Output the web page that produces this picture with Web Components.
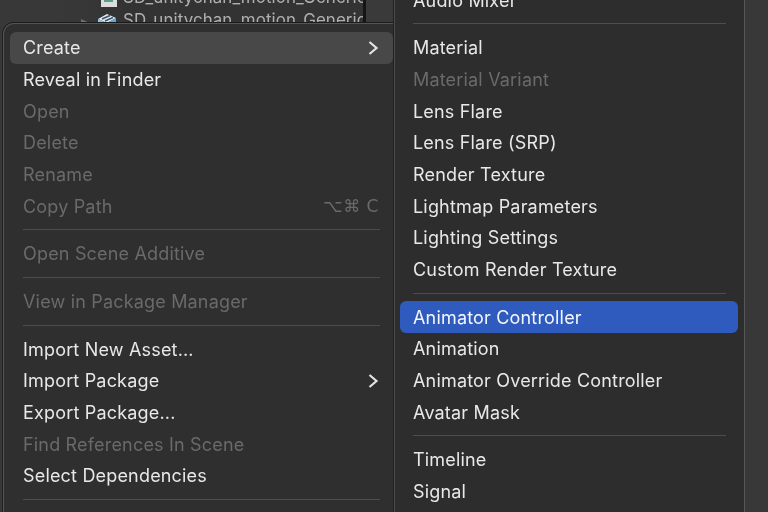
<!DOCTYPE html>
<html>
<head>
<meta charset="utf-8">
<title>Create menu</title>
<style>
  html, body { margin: 0; height: 100%; background: #383838; overflow: hidden; }
  body { font-family: Inter, "Liberation Sans", sans-serif; }
</style>
</head>
<body>
<menu-stage>
  <div slot="left">
    <asset-strip></asset-strip>
    <context-menu>
      <menu-item active submenu>Create</menu-item>
      <menu-item>Reveal in Finder</menu-item>
      <menu-item disabled>Open</menu-item>
      <menu-item disabled>Delete</menu-item>
      <menu-item disabled>Rename</menu-item>
      <menu-item disabled shortcut="⌥⌘ C">Copy Path</menu-item>
      <menu-sep></menu-sep>
      <menu-item disabled>Open Scene Additive</menu-item>
      <menu-sep></menu-sep>
      <menu-item disabled>View in Package Manager</menu-item>
      <menu-sep></menu-sep>
      <menu-item>Import New Asset...</menu-item>
      <menu-item submenu>Import Package</menu-item>
      <menu-item>Export Package...</menu-item>
      <menu-item disabled>Find References In Scene</menu-item>
      <menu-item>Select Dependencies</menu-item>
      <menu-sep></menu-sep>
    </context-menu>
  </div>
  <sub-menu slot="right">
    <menu-item>Audio Mixer</menu-item>
    <menu-sep></menu-sep>
    <menu-item>Material</menu-item>
    <menu-item disabled>Material Variant</menu-item>
    <menu-item>Lens Flare</menu-item>
    <menu-item>Lens Flare (SRP)</menu-item>
    <menu-item>Render Texture</menu-item>
    <menu-item>Lightmap Parameters</menu-item>
    <menu-item>Lighting Settings</menu-item>
    <menu-item>Custom Render Texture</menu-item>
    <menu-sep></menu-sep>
    <menu-item selected>Animator Controller</menu-item>
    <menu-item>Animation</menu-item>
    <menu-item>Animator Override Controller</menu-item>
    <menu-item>Avatar Mask</menu-item>
    <menu-sep></menu-sep>
    <menu-item>Timeline</menu-item>
    <menu-item>Signal</menu-item>
  </sub-menu>
</menu-stage>

<script>
class MenuStage extends HTMLElement {
  constructor() {
    super();
    this.attachShadow({ mode: "open" }).innerHTML = `
    <style>
      :host { display: grid; grid-template-columns: 393px 352px 1fr; height: 512px; overflow: hidden; background: #383838; filter: blur(0.45px); }
      ::slotted([slot="left"]) { display: flex; flex-direction: column; height: 512px; }
    </style>
    <slot name="left"></slot>
    <slot name="right"></slot>
    <div></div>`;
  }
}

class AssetStrip extends HTMLElement {
  constructor() {
    super();
    this.attachShadow({ mode: "open" }).innerHTML = `
    <style>
      :host { display: block; height: 24px; flex: none; overflow: hidden; background: linear-gradient(90deg, #383838 0 60px, #333 130px, #333 363px, #151515 363px 366px, #3a3a3a 366px); color: #b0b0b0; font: 16.9px Inter, "Liberation Sans", sans-serif; letter-spacing: .1px; }
      .clip { width: 363px; height: 24px; overflow: hidden; }
      .row { display: flex; align-items: center; height: 22px; white-space: nowrap; }
      .top { margin-top: -14px; padding-left: 101px; gap: 6px; }
      .second { margin-top: 1px; padding-left: 81px; }
      svg { display: block; flex: none; }
      .tri { margin-right: 5px; margin-top: 8px; }
      .cube { margin-right: 6px; margin-top: 5px; }
    </style>
    <div class="clip">
      <div class="row top">
        <svg width="16" height="20" viewBox="0 0 16 20"><path d="M0 0h16v20H0z" fill="#dcdcdc"/><path d="M3 3h9v12H3z" fill="#58a184"/></svg>
        <span>SD_unitychan_motion_Generic</span>
      </div>
      <div class="row second">
        <svg class="tri" width="11" height="10" viewBox="0 0 11 10"><path d="M0 0l11 5-11 5z" fill="#6e6e6e"/></svg>
        <svg class="cube" width="20" height="18" viewBox="0 0 20 18"><path d="M1 5l9-5 9 4-9 5z" fill="#e3e9ee"/><path d="M1 5l9 4v9l-9-4z" fill="#8cc8ee"/><path d="M19 4l-9 5v9l9-4z" fill="#5ba9de"/><path d="M5 5l8-3.5M8 7l8-3.5" stroke="#39556a" stroke-width="1.4"/></svg>
        <span>SD_unitychan_motion_Generic</span>
      </div>
    </div>`;
  }
}

class ContextMenu extends HTMLElement {
  constructor() {
    super();
    this.attachShadow({ mode: "open" }).innerHTML = `
    <style>
      :host { display: block; flex: 1; box-sizing: border-box; margin: -1px 0 0 3px; padding-top: 8px; --inset: 6px; --pad: 13px; --pad-end: 14px; --sep-start: 19px; --sep-end: 13px; background: #2f2f2f; border: 1px solid #555; border-right: 0; border-bottom: 0; border-top-left-radius: 11px; box-shadow: 0 -1px 0 #1b1b1b, -1px 0 0 #1f1f1f; }
    </style>
    <slot></slot>`;
  }
}

class SubMenu extends HTMLElement {
  constructor() {
    super();
    this.attachShadow({ mode: "open" }).innerHTML = `
    <style>
      :host { display: block; box-sizing: border-box; height: 512px; --pad: 13px; --pad-end: 12px; --inset: 6px; --inset-end: 6px; --sep-start: 19px; --sep-end: 18px; background: #2d2d2d; border-left: 1px solid #202020; border-right: 1px solid #575757; box-shadow: inset 1px 0 0 #4c4c4c; }
      .inner { margin-top: -15.7px; }
    </style>
    <div class="inner"><slot></slot></div>`;
  }
}

class MenuItem extends HTMLElement {
  constructor() {
    super();
    this.attachShadow({ mode: "open" }).innerHTML = `
    <style>
      :host { display: block; height: 31.67px; color: #e8e8e8; font: 18px Inter, "Liberation Sans", sans-serif; letter-spacing: .18px; }
      .row { display: flex; align-items: center; justify-content: space-between; box-sizing: border-box; height: 31.67px; margin: 0 var(--inset-end, 0) 0 var(--inset, 0); padding: 0 var(--pad-end, 12px) 0 var(--pad, 13px); border-radius: 6px; white-space: nowrap; }
      :host([disabled]) { color: #6a6a6a; }
      :host([active]) .row { background: #484848; }
      :host([selected]) { color: #f4f6fb; }
      :host([selected]) .row { background: #2e5bbd; }
      .end { display: flex; align-items: center; }
      .keys { font-family: "DejaVu Sans", sans-serif; font-size: 17px; white-space: pre; letter-spacing: .5px; }
      svg { display: block; }
    </style>
    <div class="row"><span><slot></slot></span><span class="end"></span></div>`;
  }

  connectedCallback() {
    const end = this.shadowRoot.querySelector(".end");
    if (this.hasAttribute("shortcut")) {
      end.innerHTML = `<span class="keys">${this.getAttribute("shortcut")}</span>`;
    }
    if (this.hasAttribute("submenu")) {
      end.innerHTML = `<svg width="12" height="16" viewBox="0 0 12 16"><path d="M2.5 2l7 6-7 6" fill="none" stroke="#e4e4e4" stroke-width="2.2"/></svg>`;
    }
  }
}

class MenuSep extends HTMLElement {
  constructor() {
    super();
    this.attachShadow({ mode: "open" }).innerHTML = `
    <style>
      :host { display: flex; align-items: center; height: 16px; padding: 0 var(--sep-end, 12px) 0 var(--sep-start, 13px); }
      div { flex: 1; height: 1px; background: #4d4d4d; }
    </style>
    <div></div>`;
  }
}

customElements.define("menu-stage", MenuStage);
customElements.define("asset-strip", AssetStrip);
customElements.define("context-menu", ContextMenu);
customElements.define("sub-menu", SubMenu);
customElements.define("menu-item", MenuItem);
customElements.define("menu-sep", MenuSep);
</script>
</body>
</html>
